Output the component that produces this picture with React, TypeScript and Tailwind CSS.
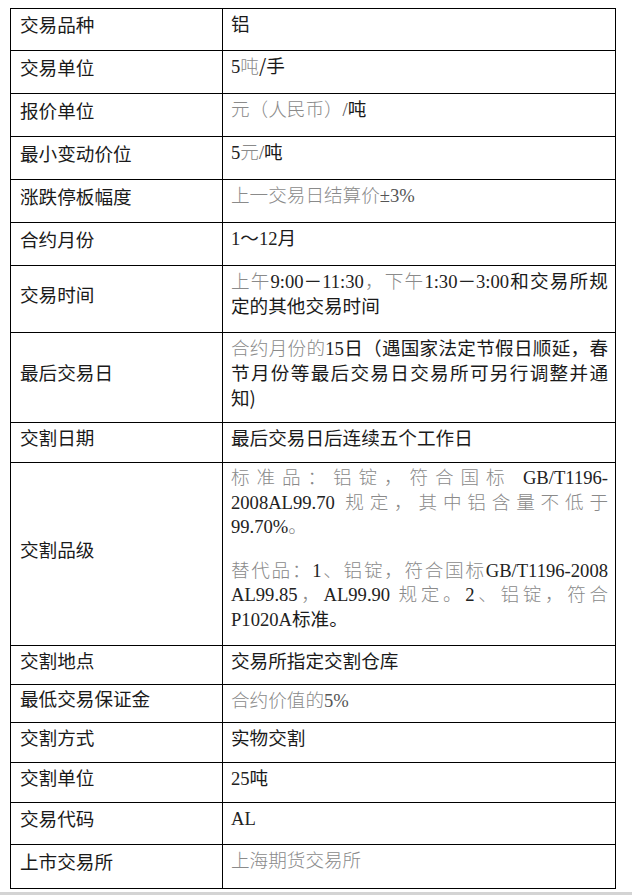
import React from "react";

const sans = "font-['Noto_Sans_CJK_SC',sans-serif]";
const serif = "font-['Liberation_Serif','Noto_Sans_CJK_SC',serif]";

// gray, thin CJK run
function G({ children }: { children: React.ReactNode }) {
  return <span className="text-[#8a8a8a] font-light leading-[0]">{children}</span>;
}

// serif latin / digits run
function N({ children, gray }: { children: React.ReactNode; gray?: boolean }) {
  return <span className={`${serif} leading-[0] ${gray ? "text-[#555]" : "text-[#222]"}`}>{children}</span>;
}

// a full-width justified line
function Line({ children, last }: { children: React.ReactNode; last?: boolean }) {
  return <div className={last ? "whitespace-nowrap" : "whitespace-nowrap [text-align-last:justify]"}>{children}</div>;
}

const rows: { label: string; height: string; value: React.ReactNode }[] = [
  { label: "交易品种", height: "h-[42px]", value: "铝" },
  {
    label: "交易单位",
    height: "h-[43px]",
    value: (
      <>
        <N>5</N>
        <G>吨</G>/手
      </>
    ),
  },
  {
    label: "报价单位",
    height: "h-[43px]",
    value: (
      <>
        <G>元（人民币）</G>
        <N gray>/</N>吨
      </>
    ),
  },
  {
    label: "最小变动价位",
    height: "h-[43px]",
    value: (
      <>
        <N>5</N>
        <G>元</G>
        <N gray>/</N>吨
      </>
    ),
  },
  {
    label: "涨跌停板幅度",
    height: "h-[43px]",
    value: (
      <>
        <G>上一交易日结算价</G>
        <N gray>±3%</N>
      </>
    ),
  },
  {
    label: "合约月份",
    height: "h-[43px]",
    value: (
      <>
        <N>1～12</N>月
      </>
    ),
  },
  {
    label: "交易时间",
    height: "h-[67px]",
    value: (
      <>
        <Line>
          <G>上午</G>
          <N>9:00－11:30</N>
          <G>，下午</G>
          <N>1:30－3:00</N>和交易所规
        </Line>
        <Line last>定的其他交易时间</Line>
      </>
    ),
  },
  {
    label: "最后交易日",
    height: "h-[90px]",
    value: (
      <>
        <Line>
          <G>合约月份的</G>
          <N>15</N>日（遇国家法定节假日顺延，春
        </Line>
        <Line>节月份等最后交易日交易所可另行调整并通</Line>
        <Line last>知)</Line>
      </>
    ),
  },
  { label: "交割日期", height: "h-[40px]", value: "最后交易日后连续五个工作日" },
  {
    label: "交割品级",
    height: "h-[183px]",
    value: (
      <div className="flex flex-col gap-[19px] leading-[24.5px]">
        <div>
          <Line>
            <G>标准品：铝锭，符合国标</G>
            <N> GB/T1196-</N>
          </Line>
          <Line>
            <N>2008AL99.70 </N>
            <G>规定，其中铝含量不低于</G>
          </Line>
          <Line last>
            <N>99.70%</N>
            <G>。</G>
          </Line>
        </div>
        <div>
          <Line>
            <G>替代品：</G>
            <N>1</N>
            <G>、铝锭，符合国标</G>
            <N>GB/T1196-2008</N>
          </Line>
          <Line>
            <N>AL99.85</N>
            <G>，</G>
            <N>AL99.90 </N>
            <G>规定。</G>
            <N>2</N>
            <G>、铝锭，符合</G>
          </Line>
          <Line last>
            <N>P1020A</N>标准。
          </Line>
        </div>
      </div>
    ),
  },
  { label: "交割地点", height: "h-[39px]", value: "交易所指定交割仓库" },
  {
    label: "最低交易保证金",
    height: "h-[38px]",
    value: (
      <>
        <G>合约价值的</G>
        <N gray>5%</N>
      </>
    ),
  },
  { label: "交割方式", height: "h-[40px]", value: "实物交割" },
  {
    label: "交割单位",
    height: "h-[40px]",
    value: (
      <>
        <N>25</N>吨
      </>
    ),
  },
  { label: "交易代码", height: "h-[42px]", value: <N>AL</N> },
  { label: "上市交易所", height: "h-[44px]", value: <G>上海期货交易所</G> },
];

export default function App() {
  return (
    <div className={`relative w-[632px] h-[895px] bg-white overflow-hidden ${sans}`}>
      <div className="pt-[8px] pl-[10px]">
        <table className="border-collapse w-[606px] table-fixed text-[18.6px] leading-[25px] text-[#1a1a1a]">
          <colgroup>
            <col className="w-[212px]" />
            <col />
          </colgroup>
          <tbody>
            {rows.map((row) => (
              <tr key={row.label} className={row.height}>
                <td className="border border-black align-middle pl-[9px] pt-0 pb-[12px] whitespace-nowrap">
                  {row.label}
                </td>
                <td className="border border-black align-top pl-[8px] pr-[7px] pt-[1px] pb-0">{row.value}</td>
              </tr>
            ))}
          </tbody>
        </table>
      </div>
      <div className="absolute left-0 right-0 bottom-0 h-[3px] bg-[#d4d4d4]" />
    </div>
  );
}
